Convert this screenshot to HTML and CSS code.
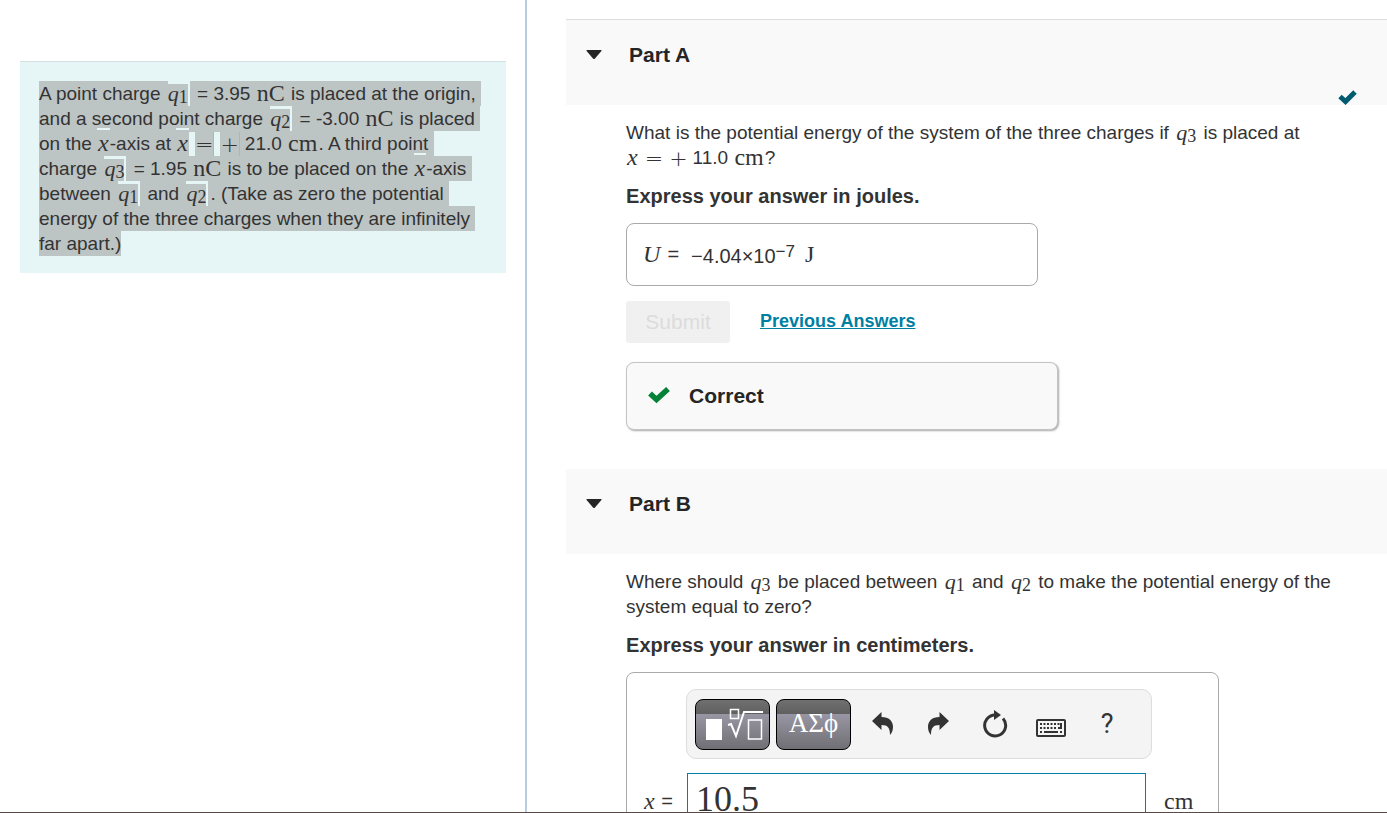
FILE: index.html
```html
<!DOCTYPE html>
<html lang="en">
<head>
<meta charset="utf-8">
<title>Potential energy of three charges</title>
<link rel="stylesheet" href="styles.css">
</head>
<body>
<div class="page">

<aside class="sidebar">
<div class="problem">
<p><mark>A point charge <span class="q">q<sub>1</sub></span> = 3.95 <span class="unit">nC</span> is placed at the origin, </mark><br>
<mark>and a second point charge <span class="q">q<sub>2</sub></span> = -3.00 <span class="unit">nC</span> is placed </mark><br>
<mark>on the <span class="var">x</span>-axis at <span class="var">x</span><span class="op">=</span><span class="op">+</span>21.0 <span class="unit">cm</span>. A third point </mark><br>
<mark>charge <span class="q">q<sub>3</sub></span> = 1.95 <span class="unit">nC</span> is to be placed on the <span class="var">x</span>-axis </mark><br>
<mark>between <span class="q">q<sub>1</sub></span> and <span class="q">q<sub>2</sub></span>. (Take as zero the potential </mark><br>
<mark>energy of the three charges when they are infinitely </mark><br>
<mark>far apart.)</mark></p>
</div>
</aside>

<main class="content">
<section class="part">
<header class="part-head first">
<button class="toggle" type="button" aria-label="Collapse Part A"><svg width="16" height="10" viewBox="0 0 16 10"><path d="M1 0h14q1 0 .4 1L9 8.500q-1 1-2 0L.6 1Q0 0 1 0z" fill="#252525"/></svg></button>
<h2>Part A</h2>
<svg class="done" width="19" height="15" viewBox="0 0 19 15"><path d="M2 6.500l5.500 5L17 2" fill="none" stroke="#005a70" stroke-width="5"/></svg>
</header>
<div class="part-body">
<p class="question">What is the potential energy of the system of the three charges if <span class="q">q<sub>3</sub></span> is placed at <br><span class="var">x</span><span class="op">=</span><span class="op">+</span>11.0 <span class="unit">cm</span>?</p>
<p class="instruction">Express your answer in joules.</p>
<div class="result"><span class="symbol">U</span><span class="equals">=</span><span class="value">−4.04×10<sup>−7</sup></span><span class="joule">J</span></div>
<div class="actions">
<button class="submit" type="button" disabled>Submit</button>
<a class="previous" href="#">Previous Answers</a>
</div>
<div class="feedback">
<svg width="22" height="17" viewBox="0 0 22 17"><path d="M2 6.500l6.500 6L20 2" fill="none" stroke="#038238" stroke-width="5.500"/></svg>
<strong>Correct</strong>
</div>
</div>
</section>

<section class="part">
<header class="part-head">
<button class="toggle" type="button" aria-label="Collapse Part B"><svg width="16" height="10" viewBox="0 0 16 10"><path d="M1 0h14q1 0 .4 1L9 8.500q-1 1-2 0L.6 1Q0 0 1 0z" fill="#252525"/></svg></button>
<h2>Part B</h2>
</header>
<div class="part-body">
<p class="question">Where should <span class="q">q<sub>3</sub></span> be placed between <span class="q">q<sub>1</sub></span> and <span class="q">q<sub>2</sub></span> to make the potential energy of the <br>system equal to zero?</p>
<p class="instruction">Express your answer in centimeters.</p>
<div class="editor">
<div class="toolbar">
<button class="palette" type="button" aria-label="Templates"><svg width="60" height="34" viewBox="0 0 60 34">
<path d="M3 13h16v21H3z" fill="#fff"/>
<g fill="none" stroke="#fff"><path d="M27.500 3.500h8v9h-8zM45.500 14h13v19h-13z" stroke-width="1.500"/><path d="M25 19l3-1 5 12 8-24h19" stroke-width="2"/></g>
</svg></button>
<button class="palette" type="button">ΑΣϕ</button>
<button class="tool" type="button" aria-label="Undo"><svg width="22" height="24" viewBox="0 0 22 24"><path d="M0 9L9.500 0v5C17 5 21 9 21 15c0 3-1 6-3 8 0-7-2-10-8.500-10v5z" fill="#333"/></svg></button>
<button class="tool" type="button" aria-label="Redo"><svg width="22" height="24" viewBox="0 0 22 24"><path d="M21 9L11.500 0v5C4 5 0 9 0 15c0 3 1 6 3 8 0-7 2-10 8.500-10v5z" fill="#333"/></svg></button>
<button class="tool" type="button" aria-label="Reset"><svg width="26" height="28" viewBox="0 0 26 28"><path d="M21 8.500A10.500 10.500 0 1 1 13 5" fill="none" stroke="#333" stroke-width="3"/><path d="M12 0l7 5-7 5z" fill="#333"/></svg></button>
<button class="tool keyboard" type="button" aria-label="Keyboard"><svg width="30" height="18" viewBox="0 0 30 18"><rect x="1" y="1" width="28" height="16" rx="1" fill="none" stroke="#333" stroke-width="2"/><path d="M4 5h20M4 9h17M4 13h2M24 13h2" stroke="#333" stroke-width="2" stroke-dasharray="2 1.500"/><path d="M8 13h14M25 4v6M22 9h4" stroke="#333" stroke-width="2"/></svg></button>
<button class="tool help" type="button" aria-label="Help">?</button>
</div>
<label class="lhs" for="answer"><span class="var">x</span> =</label>
<input class="answer" id="answer" type="text" value="10.5">
<span class="suffix">cm</span>
</div>
</div>
</section>
</main>

</div>
</body>
</html>
```
FILE: styles.css
```css
* {
  box-sizing: border-box;
}
body {
  margin: 0;
  color: #333;
  background: #fff;
  font-family: "Liberation Sans", Arial, sans-serif;
  font-size: 20px;
  line-height: 25px;
}
p, h2 {
  margin: 0;
}
button {
  padding: 0;
  border: 0;
  background: none;
  font-family: inherit;
}
svg {
  display: block;
}
.page {
  display: flex;
  height: 100vh;
  overflow: hidden;
  border-bottom: 1px solid #5a4a47;
}

/* problem statement */
.sidebar {
  flex: 0 0 38%;
  padding: 61px 19px 0 20px;
  border-right: 2px solid #b9cbdf;
}
.problem {
  padding: 19px 19px 17px;
  border-top: 1px solid #d5e1e1;
  background: #e6f6f6;
  font-size: 19px;
  white-space: nowrap;
}
mark {
  padding: 2px 0;
  color: inherit;
  background: #bdc4c4;
  white-space: pre;
}
mark .q {
  border-right: 2px solid #e6f6f6;
  background: linear-gradient(#e6f6f6 3px, #bdc4c4 3px);
}
mark .q sub {
  border-bottom: 2px solid #b0b4b4;
}
mark .var {
  border-top: 2px solid #e6f6f6;
}
mark .unit {
  border-bottom: 1px solid #e6f6f6;
}
mark .op {
  border-right: 1px solid #b0b4b4;
  border-bottom: 1px solid #b0b4b4;
}
mark .var + .op, mark .op + .op {
  box-shadow: -6px 0 0 #e6f6f6;
}

/* math */
.q, .var, .unit, .op, .symbol, .joule, .suffix {
  font-family: "Liberation Serif", "Times New Roman", serif;
  font-size: 24px;
  line-height: 1px;
}
.q, .var, .symbol {
  font-style: italic;
}
.q {
  margin: 0 2px;
  font-size: 22px;
  vertical-align: -1px;
}
.q sub {
  font-size: 18px;
  font-style: normal;
  line-height: 1px;
  vertical-align: -2px;
}
.var {
  padding: 0 1px;
}
.unit {
  padding: 0 1px;
}
.var, .unit {
  vertical-align: -1px;
}
.op {
  margin-left: 6px;
  font-family: "DejaVu Sans", sans-serif;
  font-size: 22px;
  font-weight: 200;
  vertical-align: -2px;
}
.op + .op {
  margin-right: 5px;
}

/* parts */
.content {
  flex: 1;
  padding: 19px 0 0 39px;
}
.part + .part {
  margin-top: 38px;
}
.part-head {
  display: flex;
  align-items: flex-start;
  height: 85px;
  padding: 22px 30px 0 20px;
  background: #f9f9f9;
}
.part-head.first {
  height: 86px;
  border-top: 1px solid #ddd;
}
.part-head h2 {
  margin-left: 27px;
  color: #252525;
  font-size: 21px;
}
.toggle {
  padding-top: 8px;
}
.done {
  align-self: flex-end;
  margin-left: auto;
}
.part-body {
  padding: 15px 20px 0 60px;
}
.question {
  font-size: 19px;
  white-space: nowrap;
}
.instruction {
  margin: 14px 0;
  font-weight: bold;
}
.result {
  display: flex;
  align-items: center;
  width: 412px;
  height: 63px;
  padding: 0 16px;
  border: 1px solid #aaa;
  border-radius: 8px;
}
.equals {
  margin: 0 12px 0 7px;
}
.value {
  padding-top: 4px;
}
.value sup {
  font-size: 17px;
  line-height: 1px;
  vertical-align: 6px;
}
.joule {
  margin-left: 10px;
}
.actions {
  display: flex;
  align-items: center;
  gap: 30px;
  margin: 15px 0 19px;
}
.submit {
  width: 104px;
  height: 42px;
  border-radius: 3px;
  color: #dcdcdc;
  background: #f0f0f0;
  font-size: 21px;
}
.previous {
  padding-bottom: 2px;
  color: #007fa3;
  font-size: 18px;
  font-weight: bold;
}
.feedback {
  display: flex;
  align-items: center;
  gap: 19px;
  width: 432px;
  height: 68px;
  margin-bottom: 39px;
  padding: 0 21px 2px;
  border: 1px solid #c4c4c4;
  border-radius: 8px;
  background: #f9f9f9;
  box-shadow: 1px 1px 2px #aaa;
  color: #252525;
  font-size: 21px;
}

/* answer editor */
.editor {
  display: grid;
  grid-template-columns: 44px 459px auto;
  row-gap: 14px;
  width: 593px;
  padding: 16px;
  border: 1px solid #aaa;
  border-radius: 8px;
}
.toolbar {
  display: flex;
  grid-column: 1 / 4;
  align-items: center;
  width: 466px;
  height: 70px;
  margin-left: 43px;
  padding: 0 8px;
  border: 1px solid #ddd;
  border-radius: 10px;
  background: #f4f4f4;
}
.palette {
  display: flex;
  flex-shrink: 0;
  align-items: center;
  justify-content: center;
  width: 75px;
  height: 51px;
  margin-right: 6px;
  padding-bottom: 2px;
  border: 1px solid #000;
  border-radius: 8px;
  color: #fff;
  background: linear-gradient(#707070, #606060 28%, #9896a3 29%, #706f74);
  font-family: "Liberation Serif", serif;
  font-size: 27px;
}
.tool {
  display: flex;
  justify-content: center;
  width: 56px;
  color: #333;
}
.palette + .tool {
  margin-left: -2px;
}
.keyboard {
  padding-top: 7px;
}
.help {
  font-family: Roboto, sans-serif;
  font-size: 27px;
}
.lhs {
  padding-top: 16px;
}
.answer {
  height: 54px;
  padding: 0 8px 2px;
  border: 1px solid #007fa3;
  color: #333;
  font-family: "Liberation Serif", serif;
  font-size: 36px;
}
.suffix {
  padding: 28px 0 0 18px;
}
```
